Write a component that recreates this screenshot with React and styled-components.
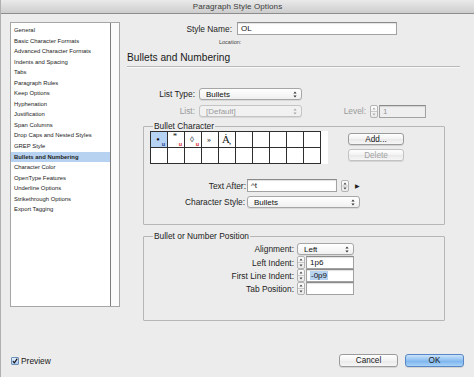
import React from 'react';
import styled, { createGlobalStyle } from 'styled-components';

const GlobalStyle = createGlobalStyle`
  html, body { margin: 0; padding: 0; background: #fff; }
  * { box-sizing: border-box; }
`;

const UI = `"Liberation Sans", Arial, sans-serif`;

// ---------- window ----------
const Window = styled.div`
  width: 474px;
  height: 377px;
  background: #ececec;
  display: flex;
  flex-direction: column;
  font-family: ${UI};
  color: #1a1a1a;
  border-left: 1px solid #b0b0b0;
  overflow: hidden;
`;

const TitleBar = styled.div`
  height: 14px;
  flex: none;
  background: linear-gradient(#eaeaea, #cdcdcd);
  border-bottom: 1px solid #8d8d8d;
  display: flex;
  align-items: center;
  justify-content: center;
  font-size: 8px;
  color: #3a3a3a;
  letter-spacing: 0.1px;
`;

const Content = styled.div`
  display: flex;
  padding: 8px 0 0 9px;
`;

// ---------- left list ----------
const ListBox = styled.div`
  width: 110px;
  height: 285px;
  background: #fff;
  border: 1px solid #a6a6a6;
  display: flex;
`;

const Items = styled.ul`
  list-style: none;
  margin: 0;
  padding: 2px 0 0;
  flex: 1;
  border-right: 1px solid #7d7d7d;
`;

const Item = styled.li`
  height: 10.55px;
  line-height: 10.55px;
  padding-left: 3px;
  font-size: 5.9px;
  white-space: nowrap;
  color: #222;
  font-weight: ${p => (p.$active ? 'bold' : 'normal')};
  background: ${p => (p.$active ? '#b7d2f0' : 'transparent')};
`;

const Track = styled.div`
  width: 8px;
  background: #fbfbfb;
`;

// ---------- main panel ----------
const Main = styled.div`
  flex: 1;
  padding-left: 7px;
  padding-right: 14px;
`;

const Row = styled.div`
  display: flex;
  align-items: center;
  height: ${p => p.$h || 13}px;
  margin-top: ${p => p.$mt || 0}px;
`;

const Label = styled.div`
  width: ${p => p.$w}px;
  text-align: right;
  padding-right: ${p => p.$pr ?? 4}px;
  font-size: 8.4px;
  white-space: nowrap;
  color: ${p => (p.$dim ? '#9a9a9a' : '#1c1c1c')};
`;

const TextField = styled.div`
  width: ${p => p.$w}px;
  height: ${p => p.$h || 13}px;
  background: ${p => (p.$dim ? '#efefef' : '#fff')};
  border: 1px solid #a2a2a2;
  border-top-color: #8a8a8a;
  box-shadow: inset 0 1px 1px rgba(0, 0, 0, 0.12);
  font-size: 8px;
  display: flex;
  align-items: center;
  padding-left: 3px;
  color: ${p => (p.$dim ? '#9a9a9a' : '#111')};
`;

const Selected = styled.span`
  background: #b7d3f2;
  padding: 0 1px;
`;

const Popup = styled.div`
  width: ${p => p.$w}px;
  height: 12px;
  border: 1px solid ${p => (p.$dim ? '#c4c4c4' : '#a6a6a6')};
  border-radius: 3px;
  background: ${p => (p.$dim ? '#f1f1f1' : 'linear-gradient(#ffffff, #f0f0f0)')};
  box-shadow: 0 1px 0 rgba(0, 0, 0, 0.08);
  display: flex;
  align-items: center;
  justify-content: space-between;
  padding: 0 4px 0 6px;
  font-size: 8px;
  color: ${p => (p.$dim ? '#9a9a9a' : '#111')};
`;

const Arrows = ({ dim }) => (
  <svg width="4" height="7" viewBox="0 0 4 7">
    <path d="M2 0.5 L3.6 2.6 H0.4 Z M2 6.5 L3.6 4.4 H0.4 Z" fill={dim ? '#a8a8a8' : '#333'} />
  </svg>
);

const StepBox = styled.div`
  width: 8px;
  height: ${p => p.$h || 13}px;
  border: 1px solid #b3b3b3;
  border-radius: 2px;
  background: linear-gradient(#fdfdfd, #eaeaea);
  display: flex;
  flex-direction: column;
  align-items: center;
  justify-content: space-around;
  margin-right: 1px;
  flex: none;
`;

const Stepper = ({ h, dim }) => (
  <StepBox $h={h}>
    <svg width="6" height={(h || 13) - 2} viewBox={`0 0 6 ${(h || 13) - 2}`}>
      <path d={`M3 1.5 L4.5 3.5 H1.5 Z`} fill={dim ? '#aaa' : '#444'} />
      <line x1="0" x2="6" y1={((h || 13) - 2) / 2} y2={((h || 13) - 2) / 2} stroke="#bdbdbd" strokeWidth="0.8" />
      <path d={`M3 ${(h || 13) - 3.5} L4.5 ${(h || 13) - 5.5} H1.5 Z`} fill={dim ? '#aaa' : '#444'} />
    </svg>
  </StepBox>
);

const Location = styled.div`
  font-size: 5.5px;
  color: #444;
  padding-left: 92px;
  margin-top: 3px;
  height: 8px;
  line-height: 8px;
`;

const Heading = styled.div`
  font-size: 10.2px;
  margin-top: 6px;
  height: 11px;
  line-height: 11px;
  color: #1a1a1a;
`;

const Separator = styled.div`
  margin-top: 3px;
  border-top: 1px solid #b9b9b9;
  border-bottom: 1px solid #f8f8f8;
`;

const Group = styled.fieldset`
  margin: ${p => p.$mt}px 15px 0 16px;
  padding: ${p => p.$pad};
  border: 1px solid #b6b6b6;
  border-radius: 1px;
  height: ${p => p.$h}px;
  min-width: 0;
`;

const Legend = styled.legend`
  font-size: 8.4px;
  padding: 0 1px;
  margin-left: 3px;
  line-height: 10px;
  color: #1c1c1c;
`;

// ---------- bullet grid ----------
const GridArea = styled.div`
  display: flex;
  align-items: flex-start;
`;

const GridWell = styled.div`
  width: 178px;
  background: #fff;
  flex: none;
`;

const BulletGrid = styled.div`
  display: grid;
  grid-template-columns: repeat(10, 17px);
  grid-auto-rows: 16px;
  width: 171px;
  border-top: 1px solid #2e2e2e;
  border-left: 1px solid #2e2e2e;
`;

const Cell = styled.div`
  position: relative;
  border-right: 1px solid #2e2e2e;
  border-bottom: 1px solid #2e2e2e;
  background: ${p => (p.$sel ? '#b7d3f3' : '#fff')};
  font-family: "Liberation Serif", "DejaVu Serif", serif;
  font-size: ${p => p.$fs || 9}px;
  display: flex;
  justify-content: center;
  align-items: ${p => p.$top ? 'flex-start' : 'center'};
  padding-right: 2px;
  color: #111;
  line-height: 1;
`;

const FontMark = styled.span`
  position: absolute;
  right: 2px;
  bottom: 0px;
  font-family: ${UI};
  font-size: 5.5px;
  font-weight: bold;
  color: ${p => p.$c};
`;

const Buttons = styled.div`
  display: flex;
  flex-direction: column;
  gap: 4px;
  margin-left: 20px;
  margin-top: 2px;
`;

const Button = styled.div`
  width: ${p => p.$w || 56}px;
  height: ${p => p.$h || 12}px;
  border: 1px solid ${p => (p.$primary ? '#5787c5' : p.$dim ? '#c2c2c2' : '#9b9b9b')};
  border-radius: 3px;
  background: ${p =>
    p.$primary
      ? 'linear-gradient(#cbe3fb, #8dbff0 50%, #79b2ee 51%, #a8d2f7)'
      : 'linear-gradient(#ffffff, #f2f2f2 50%, #e9e9e9 51%, #f6f6f6)'};
  box-shadow: 0 1px 0 rgba(0, 0, 0, 0.1);
  display: flex;
  align-items: center;
  justify-content: center;
  font-size: 8.2px;
  color: ${p => (p.$dim ? '#a3a3a3' : '#1a1a1a')};
`;

const Caret = styled.span`
  font-size: 6px;
  margin-left: 5px;
  color: #222;
`;

// ---------- footer ----------
const Footer = styled.div`
  margin-top: auto;
  display: flex;
  align-items: center;
  padding: 0 10px 10px 10px;
  height: 23px;
`;

const Check = styled.label`
  display: flex;
  align-items: center;
  gap: 2px;
  font-size: 8.4px;
  color: #1a1a1a;
  flex: 1;
`;

const Box = styled.span`
  width: 8px;
  height: 8px;
  border: 1px solid #6f8fb8;
  border-radius: 1px;
  background: linear-gradient(#e3efff, #a9c8ee);
  display: flex;
  align-items: center;
  justify-content: center;
`;

const FooterButtons = styled.div`
  display: flex;
  gap: 7px;
  margin-right: 0px;
`;

const categories = [
  'General',
  'Basic Character Formats',
  'Advanced Character Formats',
  'Indents and Spacing',
  'Tabs',
  'Paragraph Rules',
  'Keep Options',
  'Hyphenation',
  'Justification',
  'Span Columns',
  'Drop Caps and Nested Styles',
  'GREP Style',
  'Bullets and Numbering',
  'Character Color',
  'OpenType Features',
  'Underline Options',
  'Strikethrough Options',
  'Export Tagging',
];

const bullets = [
  { g: '•', u: '#1e3f8a', sel: true, fs: 10 },
  { g: '*', u: '#d8262b', top: true, fs: 9 },
  { g: '◊', u: '#d8262b', fs: 8 },
  { g: '»', fs: 8 },
  { g: 'Ȧ̦', fs: 11 },
];

const App = () => {
  const cells = Array.from({ length: 20 }, (_, i) => bullets[i] || null);

  return (
    <>
      <GlobalStyle />
      <Window>
        <TitleBar>Paragraph Style Options</TitleBar>

        <Content>
          {/* liste des catégories */}
          <ListBox>
            <Items>
              {categories.map((c) => (
                <Item key={c} $active={c === 'Bullets and Numbering'}>{c}</Item>
              ))}
            </Items>
            <Track />
          </ListBox>

          {/* panneau principal */}
          <Main>
            <Row $h={13}>
              <Label $w={110} $pr={5}>Style Name:</Label>
              <TextField $w={160}>OL</TextField>
            </Row>
            <Location>Location:</Location>
            <Heading>Bullets and Numbering</Heading>
            <Separator />

            <Row $h={12} $mt={20}>
              <Label $w={72}>List Type:</Label>
              <Popup $w={103}>Bullets<Arrows /></Popup>
            </Row>
            <Row $h={12} $mt={5}>
              <Label $w={72} $dim>List:</Label>
              <Popup $w={103} $dim>[Default]<Arrows dim /></Popup>
              <Label $w={68} $dim>Level:</Label>
              <Stepper h={13} dim />
              <TextField $w={47} $dim>1</TextField>
            </Row>

            <Group $mt={4} $h={104} $pad="0 6px 0 6px">
              <Legend>Bullet Character</Legend>
              <GridArea>
                <GridWell>
                  <BulletGrid>
                    {cells.map((b, i) => (
                      <Cell key={i} $sel={b && b.sel} $fs={b && b.fs} $top={b && b.top}>
                        {b && b.g}
                        {b && b.u && <FontMark $c={b.u}>u</FontMark>}
                      </Cell>
                    ))}
                  </BulletGrid>
                </GridWell>
                <Buttons>
                  <Button>Add...</Button>
                  <Button $dim>Delete</Button>
                </Buttons>
              </GridArea>

              <Row $h={13} $mt={15}>
                <Label $w={97} $pr={1}>Text After:</Label>
                <TextField $w={90}>^t</TextField>
                <span style={{ width: 4 }} />
                <Stepper h={12} />
                <Caret>▶</Caret>
              </Row>
              <Row $h={12} $mt={4}>
                <Label $w={97} $pr={2}>Character Style:</Label>
                <Popup $w={113}>Bullets<Arrows /></Popup>
              </Row>
            </Group>

            <Group $mt={6} $h={90} $pad="2px 6px 0 6px">
              <Legend>Bullet or Number Position</Legend>
              <Row $h={12}>
                <Label $w={147} $pr={3}>Alignment:</Label>
                <Popup $w={57}>Left<Arrows /></Popup>
              </Row>
              <Row $h={13} $mt={1}>
                <Label $w={147} $pr={3}>Left Indent:</Label>
                <Stepper h={13} />
                <TextField $w={48}>1p6</TextField>
              </Row>
              <Row $h={13} $mt={0}>
                <Label $w={147} $pr={3}>First Line Indent:</Label>
                <Stepper h={13} />
                <TextField $w={48}><Selected>-0p9</Selected></TextField>
              </Row>
              <Row $h={13} $mt={0}>
                <Label $w={147} $pr={3}>Tab Position:</Label>
                <Stepper h={13} />
                <TextField $w={48} />
              </Row>
            </Group>
          </Main>
        </Content>

        <Footer>
          <Check>
            <Box>
              <svg width="8" height="8" viewBox="0 0 8 8">
                <path d="M1.2 4.2 L3.2 6.4 L7 0.8" stroke="#111" strokeWidth="1.5" fill="none" />
              </svg>
            </Box>
            Preview
          </Check>
          <FooterButtons>
            <Button $w={59} $h={13}>Cancel</Button>
            <Button $w={59} $h={13} $primary>OK</Button>
          </FooterButtons>
        </Footer>
      </Window>
    </>
  );
};

export default App;
